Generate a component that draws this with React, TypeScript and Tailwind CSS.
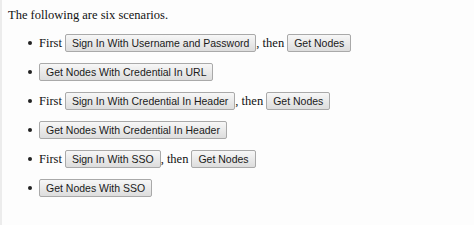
import React from "react";

function Btn({ children }: { children: React.ReactNode }) {
  return (
    <button className="h-[18px] px-[6px] rounded-[2px] border border-[#a9a9a9] bg-gradient-to-b from-[#f7f7f7] to-[#dddddd] text-[10.5px] leading-[16px] text-[#1a1a1a] font-['Liberation_Sans',Arial,sans-serif]">
      {children}
    </button>
  );
}

function Bullet() {
  return <span className="w-[4px] h-[4px] rounded-full bg-[#222] mr-[7px] shrink-0" />;
}

export default function App() {
  const rows: React.ReactNode[] = [
    <>
      <span className="mr-[3px]">First</span>
      <Btn>Sign In With Username and Password</Btn>
      <span className="mr-[3px]">, then</span>
      <Btn>Get Nodes</Btn>
    </>,
    <Btn>Get Nodes With Credential In URL</Btn>,
    <>
      <span className="mr-[3px]">First</span>
      <Btn>Sign In With Credential In Header</Btn>
      <span className="mr-[3px]">, then</span>
      <Btn>Get Nodes</Btn>
    </>,
    <Btn>Get Nodes With Credential In Header</Btn>,
    <>
      <span className="mr-[3px]">First</span>
      <Btn>Sign In With SSO</Btn>
      <span className="mr-[3px]">, then</span>
      <Btn>Get Nodes</Btn>
    </>,
    <Btn>Get Nodes With SSO</Btn>,
  ];

  return (
    <div className="w-[474px] h-[225px] bg-[#fdfdfd] border-l-[2px] border-[#ececec] px-[6px] pt-[7px] text-[12.5px] text-[#111] font-['Liberation_Serif','Times_New_Roman',serif]">
      <p className="leading-[16px]">The following are six scenarios.</p>
      <ul className="mt-[11px] pl-[20px] flex flex-col gap-[11px]">
        {rows.map((r, i) => (
          <li key={i} className="h-[18px] flex items-center">
            <Bullet />
            {r}
          </li>
        ))}
      </ul>
    </div>
  );
}
